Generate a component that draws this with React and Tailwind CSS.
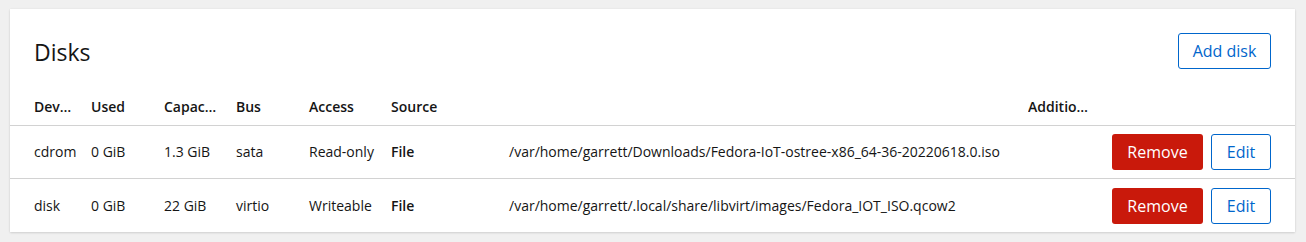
import React from "react";

const disks = [
  {
    device: "cdrom",
    used: "0 GiB",
    capacity: "1.3 GiB",
    bus: "sata",
    access: "Read-only",
    type: "File",
    path: "/var/home/garrett/Downloads/Fedora-IoT-ostree-x86_64-36-20220618.0.iso",
  },
  {
    device: "disk",
    used: "0 GiB",
    capacity: "22 GiB",
    bus: "virtio",
    access: "Writeable",
    type: "File",
    path: "/var/home/garrett/.local/share/libvirt/images/Fedora_IOT_ISO.qcow2",
  },
];

const cols = {
  device: "w-[57px]",
  used: "w-[73px]",
  capacity: "w-[72px]",
  bus: "w-[73px]",
  access: "w-[82px]",
  source: "w-[637px]",
  extra: "w-[84px]",
};

export default function App() {
  return (
    <div className="w-[1306px] h-[242px] bg-[#f0f0f0] pt-[9px] pl-[10px] font-['Open_Sans',sans-serif] text-[#151515]">
      <div className="w-[1285px] h-[223px] bg-white shadow-[0_1px_2px_rgba(3,3,3,0.12),0_0_2px_rgba(3,3,3,0.06)]">
        {/* Header */}
        <div className="flex items-center justify-between px-6 pt-6 h-[60px]">
          <h2 className="text-[23px] leading-none mt-[3px]">Disks</h2>
          <button className="h-9 w-[93px] border border-[#0066cc] rounded-[3px] text-[#0066cc] text-base">
            Add disk
          </button>
        </div>

        {/* Table head */}
        <div className="flex items-end h-[57px] pb-2 px-6 border-b border-[#d2d2d2] text-sm font-semibold leading-[21px]">
          <div className={`${cols.device} truncate pr-4`}>Device</div>
          <div className={cols.used}>Used</div>
          <div className={`${cols.capacity} truncate pr-4`}>Capacity</div>
          <div className={cols.bus}>Bus</div>
          <div className={cols.access}>Access</div>
          <div className={cols.source}>Source</div>
          <div className={`${cols.extra} truncate pr-4`}>Additional</div>
        </div>

        {/* Rows */}
        {disks.map((d, i) => (
          <div
            key={d.device}
            className={`flex items-center h-[53px] px-6 text-sm ${i === 0 ? "border-b border-[#d2d2d2]" : ""}`}
          >
            <div className={cols.device}>{d.device}</div>
            <div className={cols.used}>{d.used}</div>
            <div className={cols.capacity}>{d.capacity}</div>
            <div className={cols.bus}>{d.bus}</div>
            <div className={cols.access}>{d.access}</div>
            <div className={`${cols.source} flex`}>
              <span className="w-[118px] font-semibold">{d.type}</span>
              <span>{d.path}</span>
            </div>
            <div className={cols.extra}></div>
            <div className="flex gap-2">
              <button className="h-9 w-[91px] rounded-[3px] bg-[#c9190b] text-white text-base">
                Remove
              </button>
              <button className="h-9 w-[60px] rounded-[3px] border border-[#0066cc] text-[#0066cc] text-base">
                Edit
              </button>
            </div>
          </div>
        ))}
      </div>
    </div>
  );
}
